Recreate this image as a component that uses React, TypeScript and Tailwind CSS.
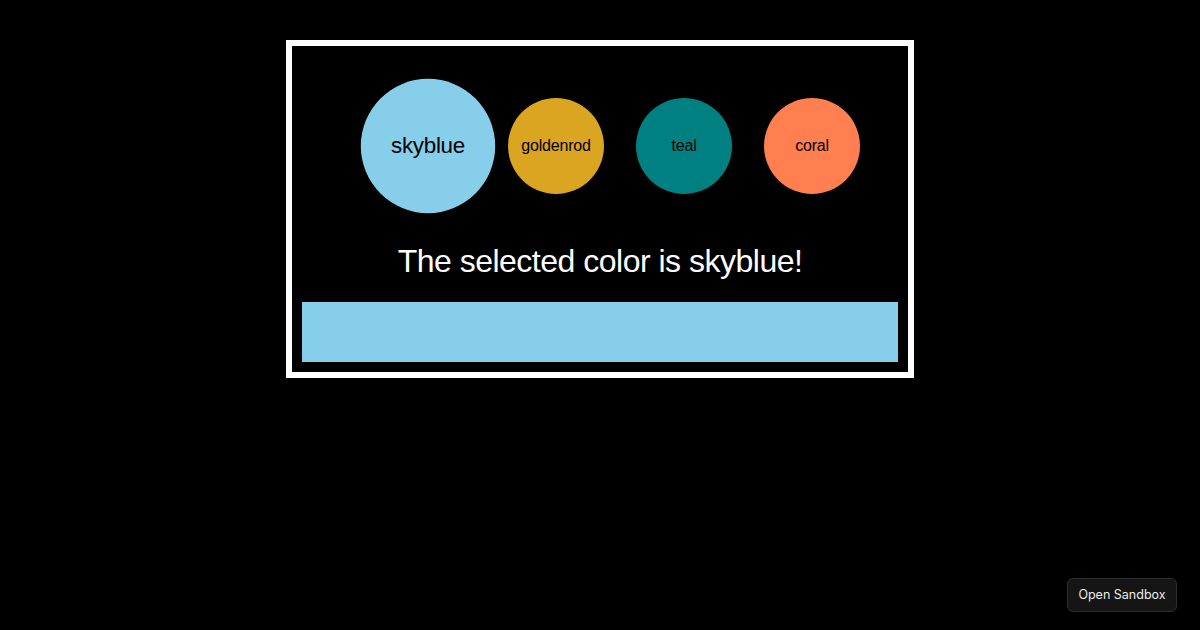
import React, { useState } from 'react';

const colors = [
  { name: 'skyblue', hex: '#87ceeb' },
  { name: 'goldenrod', hex: '#daa520' },
  { name: 'teal', hex: '#008080' },
  { name: 'coral', hex: '#ff7f50' },
];

const App: React.FC = () => {
  const [selected, setSelected] = useState('skyblue');
  const current = colors.find((c) => c.name === selected) ?? colors[0];

  return (
    <div className="h-screen w-full overflow-hidden bg-black pt-[40px] font-['Liberation_Sans',Arial,sans-serif]">
      <div className="mx-auto w-[628px] border-[6px] border-white p-[10px]">
        <ul className="mt-[26px] flex justify-center pl-[40px]">
          {colors.map((c) => (
            <li
              key={c.name}
              onClick={() => setSelected(c.name)}
              className={
                'm-4 flex h-24 w-24 cursor-pointer items-center justify-center rounded-full text-[16px] tracking-[-0.2px] text-black ' +
                (c.name === selected ? 'scale-[1.4]' : '')
              }
              style={{ backgroundColor: c.hex }}
            >
              {c.name}
            </li>
          ))}
        </ul>
        <h2 className="mt-[33px] text-center text-[32px] font-normal leading-[37px] tracking-[-0.5px] text-white">
          The selected color is {selected}!
        </h2>
        <div className="mt-[22px] h-[60px] w-full" style={{ backgroundColor: current.hex }} />
      </div>

      <button className="fixed bottom-[18px] right-[23px] h-[34px] w-[110px] rounded-md border border-[#2e2e2e] bg-[#151515] font-['Inter',sans-serif] text-[12.5px] text-[#ececec]">
        Open Sandbox
      </button>
    </div>
  );
};

export default App;
